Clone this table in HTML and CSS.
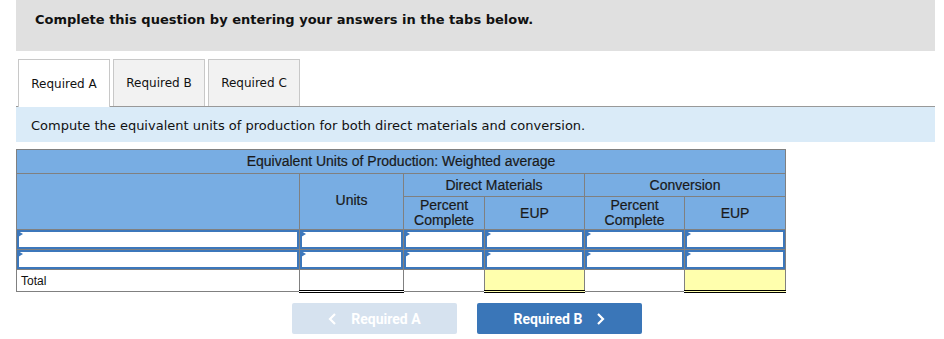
FILE: index.html
```html
<!DOCTYPE html>
<html lang="en">
<head>
  <meta charset="UTF-8">
  <title>Equivalent Units</title>
  <link rel="stylesheet" href="styles.css">
</head>
<body>

  <div class="page">
    <div class="banner">Complete this question by entering your answers in the tabs below.</div>

    <div class="tabs">
      <div class="tab active">Required A</div>
      <div class="tab">Required B</div>
      <div class="tab">Required C</div>
    </div>

    <div class="prompt">Compute the equivalent units of production for both direct materials and conversion.</div>

    <table class="eup">
      <colgroup>
        <col style="width: 283px">
        <col style="width: 104px">
        <col style="width: 81px">
        <col style="width: 100px">
        <col style="width: 100px">
        <col style="width: 101px">
      </colgroup>
      <thead>
        <tr class="row-title">
          <th colspan="6">Equivalent Units of Production: Weighted average</th>
        </tr>
        <tr class="row-group">
          <th rowspan="2"></th>
          <th rowspan="2">Units</th>
          <th colspan="2">Direct Materials</th>
          <th colspan="2">Conversion</th>
        </tr>
        <tr class="row-sub">
          <th>Percent<br>Complete</th>
          <th>EUP</th>
          <th>Percent<br>Complete</th>
          <th>EUP</th>
        </tr>
      </thead>
      <tbody>
        <tr class="row-input">
          <td><div class="entry"></div></td>
          <td><div class="entry"></div></td>
          <td><div class="entry"></div></td>
          <td><div class="entry"></div></td>
          <td><div class="entry"></div></td>
          <td><div class="entry"></div></td>
        </tr>
        <tr class="row-input">
          <td><div class="entry"></div></td>
          <td><div class="entry"></div></td>
          <td><div class="entry"></div></td>
          <td><div class="entry"></div></td>
          <td><div class="entry"></div></td>
          <td><div class="entry"></div></td>
        </tr>
        <tr class="row-total">
          <td class="label">Total</td>
          <td class="sum"></td>
          <td></td>
          <td class="sum calc"></td>
          <td></td>
          <td class="sum calc"></td>
        </tr>
      </tbody>
    </table>

    <div class="nav">
      <button class="nav-btn disabled">
        <svg width="9" height="12" viewBox="0 0 9 12"><path d="M7 1 L2 6 L7 11" fill="none" stroke="currentColor" stroke-width="2.2"/></svg>
        <span>Required A</span>
      </button>
      <button class="nav-btn">
        <span>Required B</span>
        <svg width="9" height="12" viewBox="0 0 9 12"><path d="M2 1 L7 6 L2 11" fill="none" stroke="currentColor" stroke-width="2.2"/></svg>
      </button>
    </div>
  </div>

</body>
</html>
```

FILE: styles.css
```css
body {
  margin: 0;
  background: #fff;
  font-family: "DejaVu Sans", Verdana, sans-serif;
  color: #111;
}

.page {
  padding-left: 16px;
  width: 919px;
}

.banner {
  background: #e0e0e0;
  height: 51px;
  padding-left: 19px;
  box-sizing: border-box;
  padding-top: 12px;
  font-size: 13px;
  font-weight: bold;
}

.tabs {
  display: flex;
  gap: 3px;
  padding-left: 2px;
  margin-top: 8px;
  height: 47px;
  border-bottom: 1px solid #999;
}

.tab {
  width: 92px;
  height: 47px;
  box-sizing: border-box;
  border: 1px solid #c8c8c8;
  border-bottom: none;
  background: #f2f2f2;
  font-size: 12px;
  display: flex;
  align-items: center;
  justify-content: center;
}

.tab.active {
  background: #fff;
  height: 48px;
}

.prompt {
  background: #daebf8;
  height: 35px;
  padding-left: 15px;
  box-sizing: border-box;
  padding-top: 11px;
  font-size: 13px;
}

table.eup {
  margin-top: 7px;
  border-collapse: collapse;
  table-layout: fixed;
  width: 770px;
  font-family: "Liberation Sans", Arial, sans-serif;
}

.eup th {
  background: #78ade3;
  border: 1px solid #808080;
  font-weight: normal;
  font-size: 14px;
  color: #1a1a1a;
  padding: 0;
  line-height: 15px;
  -webkit-text-stroke: 0.2px #1a1a1a;
}

.row-title th { height: 23px; }
.row-group th { height: 22px; }
.row-group th[rowspan] { padding-bottom: 2px; }
.row-sub th { height: 32px; }

.eup td {
  border: 1px solid #808080;
  padding: 0;
}

.row-input td {
  height: 19px;
}

.entry {
  position: relative;
  height: 15px;
  border: 2px solid #3c77bb;
  background: #fff;
}

/* small arrow marking an editable cell */
.entry::before {
  content: "";
  position: absolute;
  left: -1px;
  top: -1px;
  border-left: 5px solid #3c77bb;
  border-top: 3px solid transparent;
  border-bottom: 3px solid transparent;
}

.row-total td {
  height: 20px;
  font-size: 12px;
}

.row-total .label {
  padding-left: 4px;
}

.row-total .sum {
  border-bottom: 3px double #000;
}

.row-total .calc {
  background: #ffffad;
}

.nav {
  display: flex;
  gap: 20px;
  margin-top: 10px;
  padding-left: 276px;
}

.nav-btn {
  width: 165px;
  height: 31px;
  border: none;
  border-radius: 2px;
  background: #3a76b8;
  color: #fff;
  font-family: Roboto, "Liberation Sans", sans-serif;
  font-weight: bold;
  font-size: 14px;
  display: flex;
  align-items: center;
  justify-content: center;
  gap: 14px;
  cursor: pointer;
}

.nav-btn.disabled {
  background: #d6e2ef;
  cursor: default;
}
```
